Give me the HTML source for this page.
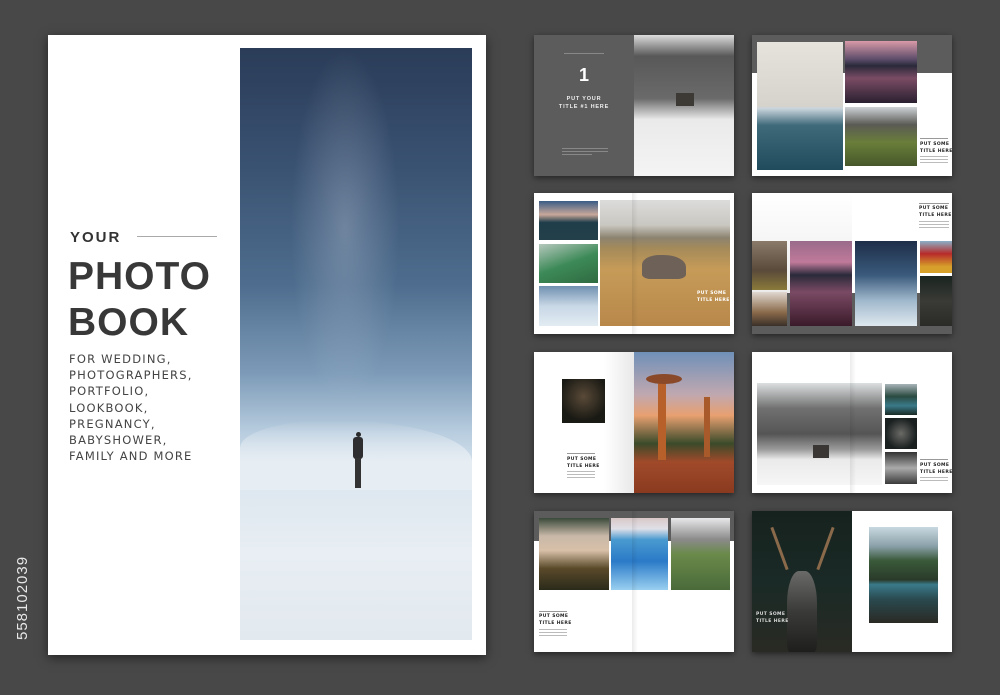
<!DOCTYPE html>
<html><head><meta charset="utf-8"><style>
*{margin:0;padding:0;box-sizing:border-box}
body{width:1000px;height:695px;background:#484848;position:relative;overflow:hidden;font-family:"Liberation Sans","DejaVu Sans",sans-serif}
.a{position:absolute}
.sp{position:absolute;width:200px;height:141px;background:#fff;box-shadow:0 2px 6px rgba(0,0,0,.5);overflow:hidden}
.fold{position:absolute;left:98px;top:0;width:6px;height:100%;background:linear-gradient(90deg,rgba(0,0,0,.08),rgba(0,0,0,0))}
.t{position:absolute;font-size:4.5px;font-weight:bold;color:#222;letter-spacing:.4px;line-height:7px;white-space:nowrap;font-family:"DejaVu Sans",sans-serif}
.ln{position:absolute;height:1px;background:#999}
.tx{position:absolute;height:1px;background:#bbb}
</style></head><body>
<div class="a" style="left:14px;top:460px;width:20px;height:180px;">
<div style="transform:rotate(-90deg);transform-origin:0 0;position:absolute;left:0;top:180px;width:180px;color:#e8e8e8;font-size:15px;letter-spacing:1px;font-family:'Liberation Sans',sans-serif">558102039</div></div>

<!-- cover -->
<div class="a" style="left:48px;top:35px;width:438px;height:620px;background:#fff;box-shadow:0 3px 10px rgba(0,0,0,.5)"></div>
<div class="a" style="left:240px;top:48px;width:232px;height:592px;background:linear-gradient(180deg,#2a3c58 0%,#3a5272 20%,#4e6d8e 40%,#7d9bb8 55%,#b8cddf 65%,#dbe6ef 72%,#e8eef3 85%,#e2e9ef 100%)"></div>
<div class="a" style="left:290px;top:48px;width:110px;height:360px;background:radial-gradient(ellipse at center,rgba(190,200,215,.35),rgba(0,0,0,0) 70%)"></div>
<div class="a" style="left:240px;top:420px;width:232px;height:70px;background:linear-gradient(180deg,rgba(255,255,255,0),#e6edf3 60%);border-radius:40% 60% 0 0"></div>
<div class="a" style="left:356px;top:432px;width:5px;height:5px;background:#2a2a2a;border-radius:50%"></div>
<div class="a" style="left:353px;top:437px;width:10px;height:22px;background:#2e2e30;border-radius:3px"></div>
<div class="a" style="left:355px;top:458px;width:6px;height:30px;background:#333"></div>
<div class="a" style="left:70px;top:229px;font-size:15px;font-weight:bold;letter-spacing:2px;color:#333">YOUR</div>
<div class="a" style="left:137px;top:236px;width:80px;height:1px;background:#aaa"></div>
<div class="a" style="left:68px;top:254px;font-size:39px;font-weight:bold;letter-spacing:1px;color:#383838;line-height:46px">PHOTO<br>BOOK</div>
<div class="a" style="left:69px;top:351px;font-size:11.5px;letter-spacing:1.2px;color:#444;line-height:16.2px;font-family:'DejaVu Sans',sans-serif">FOR WEDDING,<br>PHOTOGRAPHERS,<br>PORTFOLIO,<br>LOOKBOOK,<br>PREGNANCY,<br>BABYSHOWER,<br>FAMILY AND MORE</div>

<!-- spread 1 -->
<div class="sp" style="left:534px;top:35px;">
<div class="a" style="left:0;top:0;width:100px;height:141px;background:#5c5c5c"></div>
<div class="a" style="left:100px;top:0;width:100px;height:141px;background:linear-gradient(180deg,#dcdcdc 0%,#585858 15%,#6a6a6a 45%,#eaeaea 60%,#f4f4f4 100%)"></div>
<div class="a" style="left:142px;top:58px;width:18px;height:13px;background:#3d3935"></div>
<div class="a" style="left:30px;top:18px;width:40px;height:1px;background:#888"></div>
<div class="a" style="left:0;width:100px;top:30px;text-align:center;color:#fff;font-size:18px;font-weight:bold">1</div>
<div class="a" style="left:0;width:100px;top:60px;text-align:center;color:#eee;font-size:5.5px;font-weight:bold;letter-spacing:.8px;line-height:8px">PUT YOUR<br>TITLE #1 HERE</div>
<div class="tx" style="left:28px;top:113px;width:46px;background:#888"></div><div class="tx" style="left:28px;top:116px;width:46px;background:#888"></div><div class="tx" style="left:28px;top:119px;width:30px;background:#888"></div>
</div>

<!-- spread 2 -->
<div class="sp" style="left:752px;top:35px;">
<div class="a" style="left:0;top:0;width:200px;height:38px;background:#5c5c5c"></div>
<div class="a" style="left:5px;top:7px;width:86px;height:128px;background:linear-gradient(180deg,#e6e2dc 0%,#d6d2cc 50%,#c9d4dc 52%,#3f6a7a 65%,#1f4b5c 100%)"></div>
<div class="a" style="left:93px;top:6px;width:72px;height:62px;background:linear-gradient(180deg,#d99aa8 0%,#5a4b68 30%,#2a2a3a 40%,#7a4c64 60%,#2a2030 100%)"></div>
<div class="a" style="left:93px;top:72px;width:72px;height:59px;background:linear-gradient(180deg,#cfd3d6 0%,#5a5a55 30%,#6a7e3a 60%,#46582a 100%)"></div>
<div class="ln" style="left:168px;top:103px;width:28px"></div>
<div class="t" style="left:168px;top:106px">PUT SOME<br>TITLE HERE</div>
<div class="tx" style="left:168px;top:121px;width:28px"></div><div class="tx" style="left:168px;top:124px;width:28px"></div><div class="tx" style="left:168px;top:127px;width:28px"></div>
</div>

<!-- spread 3 -->
<div class="sp" style="left:534px;top:193px;">
<div class="a" style="left:5px;top:8px;width:59px;height:39px;background:linear-gradient(180deg,#3b5c86 0%,#c8a89a 35%,#1f3d4a 55%,#23404a 100%)"></div>
<div class="a" style="left:5px;top:51px;width:59px;height:39px;background:linear-gradient(160deg,#b5c8bd,#3d8a58 50%,#2f6a40)"></div>
<div class="a" style="left:5px;top:93px;width:59px;height:40px;background:linear-gradient(180deg,#6f8fb0 0%,#c8d8e6 50%,#e2ebf2 100%)"></div>
<div class="a" style="left:66px;top:7px;width:130px;height:126px;background:linear-gradient(180deg,#dcdcdc 0%,#c9c7c0 20%,#8c8370 30%,#a48a5a 38%,#c69b58 55%,#b8884a 100%)"></div>
<div class="a" style="left:108px;top:62px;width:44px;height:24px;background:#6e6258;border-radius:40% 50% 20% 20%"></div>
<div class="fold"></div>
<div class="t" style="left:163px;top:97px;color:#fff">PUT SOME<br>TITLE HERE</div>
</div>

<!-- spread 4 -->
<div class="sp" style="left:752px;top:193px;">
<div class="a" style="left:0;top:0;width:100px;height:141px;background:linear-gradient(180deg,#fff,#e4e4e4)"></div>
<div class="a" style="left:0;top:100px;width:200px;height:41px;background:#5c5c5c"></div>
<div class="a" style="left:0;top:48px;width:35px;height:49px;background:linear-gradient(180deg,#8a7a6a,#5a4a3a 60%,#8a7a3a)"></div>
<div class="a" style="left:0;top:99px;width:35px;height:34px;background:linear-gradient(180deg,#e0d8d0,#8a6a4a 60%,#3a3028)"></div>
<div class="a" style="left:38px;top:48px;width:62px;height:85px;background:linear-gradient(180deg,#9a6a8a 0%,#c07a9a 25%,#2a2a3a 40%,#7a4a64 60%,#3a1a2a 100%)"></div>
<div class="a" style="left:103px;top:48px;width:62px;height:85px;background:linear-gradient(180deg,#1e2e48 0%,#3a5a7c 40%,#a0b8cc 70%,#dfe8ef 100%)"></div>
<div class="a" style="left:168px;top:48px;width:32px;height:32px;background:linear-gradient(180deg,#8ab0c8 0%,#b82a2a 40%,#d6a02a 80%)"></div>
<div class="a" style="left:168px;top:83px;width:32px;height:50px;background:linear-gradient(180deg,#1a2420,#3a3a36 50%,#2a2a26)"></div>
<div class="ln" style="left:167px;top:10px;width:30px"></div>
<div class="t" style="left:167px;top:12px">PUT SOME<br>TITLE HERE</div>
<div class="tx" style="left:167px;top:28px;width:30px"></div><div class="tx" style="left:167px;top:31px;width:30px"></div><div class="tx" style="left:167px;top:34px;width:30px"></div>
</div>

<!-- spread 5 -->
<div class="sp" style="left:534px;top:352px;">
<div class="a" style="left:0;top:0;width:100px;height:141px;background:linear-gradient(90deg,#fff 70%,#e8e8e8)"></div>
<div class="a" style="left:28px;top:27px;width:43px;height:44px;background:radial-gradient(circle at 50% 40%,#5a4a38,#1a1a14 70%)"></div>
<div class="a" style="left:100px;top:0;width:100px;height:141px;background:linear-gradient(180deg,#6f90b8 0%,#c0a8b0 30%,#e8a070 45%,#3a4a2a 65%,#a04a2a 78%,#8a3a20 100%)"></div>
<div class="a" style="left:124px;top:28px;width:8px;height:80px;background:#b8602a"></div>
<div class="a" style="left:112px;top:22px;width:36px;height:10px;background:#8a4a2a;border-radius:50%"></div>
<div class="a" style="left:170px;top:45px;width:6px;height:60px;background:#a85a2a"></div>
<div class="ln" style="left:33px;top:101px;width:28px"></div>
<div class="t" style="left:33px;top:104px">PUT SOME<br>TITLE HERE</div>
<div class="tx" style="left:33px;top:119px;width:28px"></div><div class="tx" style="left:33px;top:122px;width:28px"></div><div class="tx" style="left:33px;top:125px;width:28px"></div>
</div>

<!-- spread 6 -->
<div class="sp" style="left:752px;top:352px;">
<div class="a" style="left:5px;top:31px;width:125px;height:102px;background:linear-gradient(180deg,#dcdfe0 0%,#707070 25%,#555 50%,#9a9a9a 65%,#eaeaea 75%,#f6f6f6 100%)"></div>
<div class="a" style="left:61px;top:93px;width:16px;height:13px;background:#3a3634"></div>
<div class="a" style="left:133px;top:32px;width:32px;height:31px;background:linear-gradient(180deg,#a8b4b8,#2a4a40 40%,#3a7a8a 70%,#1a2a24)"></div>
<div class="a" style="left:133px;top:66px;width:32px;height:31px;background:radial-gradient(circle,#6a6a66,#1a2020 70%)"></div>
<div class="a" style="left:133px;top:100px;width:32px;height:32px;background:linear-gradient(180deg,#333,#aaa 50%,#3a3a3a)"></div>
<div class="fold"></div>
<div class="ln" style="left:168px;top:107px;width:28px"></div>
<div class="t" style="left:168px;top:110px">PUT SOME<br>TITLE HERE</div>
<div class="tx" style="left:168px;top:125px;width:28px"></div><div class="tx" style="left:168px;top:128px;width:28px"></div>
</div>

<!-- spread 7 -->
<div class="sp" style="left:534px;top:511px;">
<div class="a" style="left:0;top:0;width:200px;height:30px;background:#5c5c5c"></div>
<div class="a" style="left:5px;top:7px;width:70px;height:72px;background:linear-gradient(180deg,#3a4a3a 0%,#c8b8a8 25%,#d8c0a8 45%,#5a4a2a 70%,#2a2a1a 100%)"></div>
<div class="a" style="left:77px;top:7px;width:57px;height:72px;background:linear-gradient(180deg,#d8c8c8 0%,#e0e0e8 15%,#4a9ad0 30%,#2a7ac8 60%,#9ad0f0 100%)"></div>
<div class="a" style="left:137px;top:7px;width:59px;height:72px;background:linear-gradient(180deg,#e8e8ea 0%,#8a8a8a 30%,#6a8a4a 50%,#4a6a3a 100%)"></div>
<div class="fold"></div>
<div class="ln" style="left:5px;top:100px;width:28px"></div>
<div class="t" style="left:5px;top:102px">PUT SOME<br>TITLE HERE</div>
<div class="tx" style="left:5px;top:118px;width:28px"></div><div class="tx" style="left:5px;top:121px;width:28px"></div><div class="tx" style="left:5px;top:124px;width:28px"></div>
</div>

<!-- spread 8 -->
<div class="sp" style="left:752px;top:511px;">
<div class="a" style="left:0;top:0;width:100px;height:141px;background:linear-gradient(180deg,#16221e 0%,#1a2a26 50%,#2a2a24 100%)"></div>
<div class="a" style="left:35px;top:60px;width:30px;height:81px;background:linear-gradient(180deg,#6a6a68,#3a3a38 50%,#1e1e1c);border-radius:40% 40% 10% 10%"></div>
<div class="a" style="left:26px;top:15px;width:3px;height:45px;background:#8a6a4a;transform:rotate(-20deg)"></div>
<div class="a" style="left:72px;top:15px;width:3px;height:45px;background:#8a6a4a;transform:rotate(20deg)"></div>
<div class="a" style="left:117px;top:16px;width:69px;height:96px;background:linear-gradient(180deg,#c8d8e0 0%,#8aa0a8 20%,#3a5a3a 35%,#2a3a2a 55%,#3a7a8a 60%,#2a4a50 75%,#2a2a24 100%)"></div>
<div class="t" style="left:4px;top:100px;color:#ddd">PUT SOME<br>TITLE HERE</div>
</div>
</body></html>
